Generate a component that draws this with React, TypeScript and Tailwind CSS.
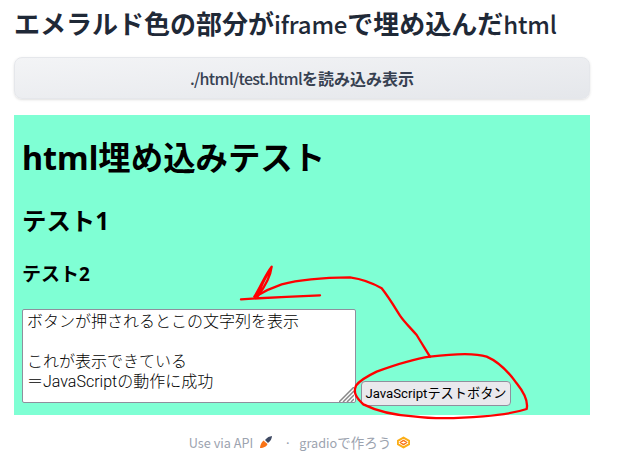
const CJK = "font-['Noto_Sans_CJK_JP',sans-serif]"

function Scribble() {
  return (
    <svg
      className="pointer-events-none absolute left-[200px] top-[255px] h-[165px] w-[340px]"
      viewBox="0 0 1020 495"
      fill="none"
      stroke="#ff0000"
      strokeWidth="7"
      strokeLinecap="round"
      strokeLinejoin="round"
    >
      <path d="M123 133 C200 128 280 124 360 121" />
      <path d="M163 125 C180 100 195 60 215 35 C212 60 195 95 172 125 C185 85 200 60 212 42" />
      <path d="M165 125 C190 110 215 98 245 88 C290 76 350 68 450 67 C485 72 520 85 545 100 C565 125 580 150 600 182 C612 200 625 212 650 240 C665 265 678 285 690 305" />
      <path d="M690 305 C640 312 590 328 530 350 C505 362 480 375 468 392 C460 410 465 425 490 448 C530 468 580 480 640 484 C700 492 780 490 850 484 C900 480 950 472 980 462 C985 440 970 410 950 385 C925 350 895 320 860 305 C830 295 770 295 690 305" />
    </svg>
  )
}

function Rocket() {
  return (
    <svg viewBox="0 0 12 12" className="h-[12px] w-[12px]">
      <path d="M5.5 3.5 C7 1.5 9.5 0.3 12 0 C11.9 2.5 10.6 5 8.5 6.5 L8 7 L5 4 Z" fill="#3f4a63" />
      <path d="M3.5 4.5 L7.5 8 C7 10 4 12 0 12 C0.2 9 1.5 6 3.5 4.5 Z" fill="#f97316" />
    </svg>
  )
}

function GradioLogo() {
  return (
    <svg viewBox="0 0 16 16" className="h-[13px] w-[13px]" fill="none" strokeLinejoin="round">
      <path d="M8 2 L15 6 V10 L8 14 L1 10 V6 Z" stroke="#fbae17" strokeWidth="2.6" />
      <path d="M8 5.5 L12 8 L8 10.5 L4 8 Z" stroke="#f97316" strokeWidth="1.8" />
    </svg>
  )
}

function ResizeGrip() {
  return (
    <svg viewBox="0 0 15 15" className="pointer-events-none absolute bottom-[1px] right-[2px] h-[15px] w-[15px]" stroke="#888888" strokeWidth="1.5">
      <path d="M0 15 L15 0 M4 15 L15 4 M8 15 L15 8 M12 15 L15 12" />
    </svg>
  )
}

export default function App() {
  return (
    <div className={`relative h-[465px] w-[623px] overflow-hidden bg-white ${CJK}`}>
      <div className="flex flex-col px-[14px] pt-[8px]">
        <h1 className="h-[49px] text-[26px] font-semibold leading-[30px] text-[#1f2937]">
          エメラルド色の部分が<span className="text-[24px] font-medium tracking-[-0.2px]">iframe</span>で埋め込んだ<span className="text-[24px] font-medium tracking-[-0.2px]">html</span>
        </h1>
        <button className="h-[42px] w-[576px] rounded-lg border border-[#e5e7eb] bg-gradient-to-br from-[#f3f4f6] to-[#e5e7eb] text-[16px] font-semibold text-[#374151] shadow-sm">
          <span className="font-medium tracking-[-0.7px]">./html/test.html</span>を読み込み表示
        </button>
        <div className="mt-4 flex h-[300px] w-[576px] flex-col bg-[#7fffd4] px-2 font-['Noto_Sans','Noto_Sans_CJK_JP',sans-serif] text-black">
          <h2 className="mt-[19px] text-[32.4px] font-bold leading-[46px]">html埋め込みテスト</h2>
          <h3 className="mt-[23px] text-[24.4px] font-bold leading-[35px]">テスト1</h3>
          <h4 className="mt-[23px] text-[19px] font-bold leading-[27px]">テスト2</h4>
          <div className="mt-[21px] flex items-end gap-[5px]">
            <div className="relative h-[94px] w-[334px]">
              <textarea
                readOnly
                className="block h-full w-full resize-none rounded-[2px] border border-[#8f8f9d] bg-white px-[4px] pt-[2px] font-['Roboto','Noto_Sans_CJK_JP',sans-serif] text-[16px] font-light leading-[20px] text-black"
                value={'ボタンが押されるとこの文字列を表示\n\nこれが表示できている\n＝JavaScriptの動作に成功'}
              />
              <ResizeGrip />
            </div>
            <button className="mb-[-3px] h-[25px] w-[150px] rounded-[4px] border border-[#8f8f9d] bg-[#e9e9ed] font-['Roboto','Noto_Sans_CJK_JP',sans-serif] text-[13.2px] font-normal leading-none text-black">
              JavaScriptテストボタン
            </button>
          </div>
        </div>
        <footer className="mt-[17px] flex w-[571px] items-center justify-center text-[12.7px] text-[#9ca3af]">
          <span>Use via API</span>
          <span className="ml-[7px]"><Rocket /></span>
          <span className="ml-[12px] mr-[8px]">·</span>
          <span>gradio<span className="text-[13.5px]">で作ろう</span></span>
          <span className="ml-[6px]"><GradioLogo /></span>
        </footer>
      </div>
      <Scribble />
    </div>
  )
}
